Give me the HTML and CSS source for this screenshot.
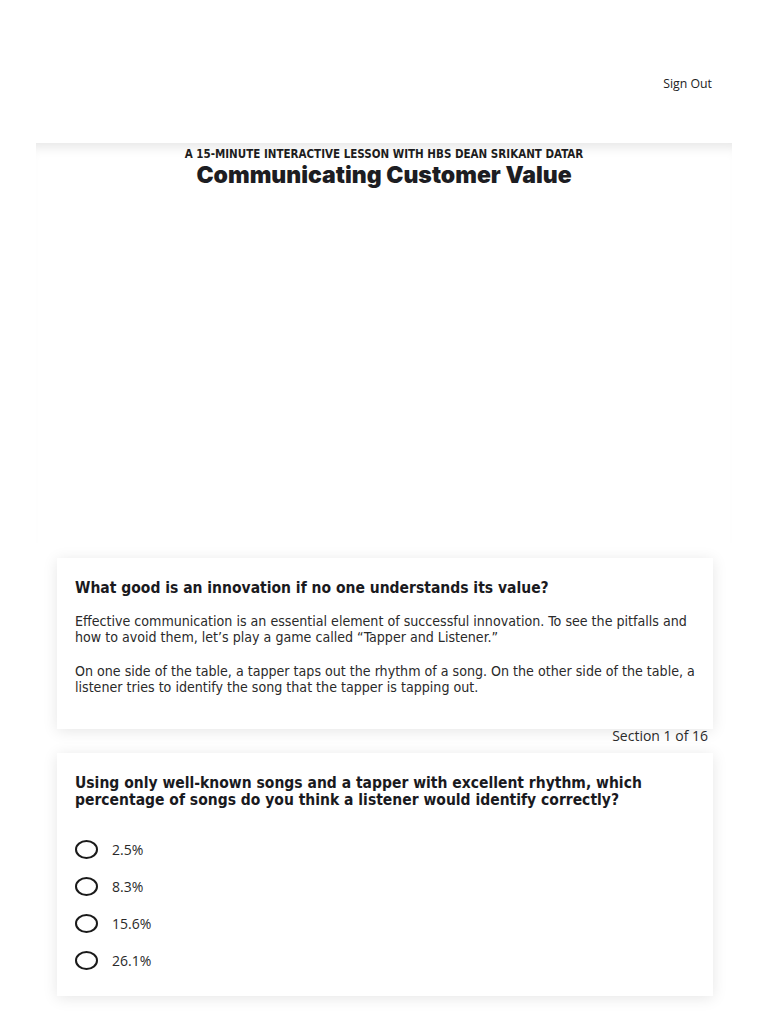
FILE: index.html
```html
<!DOCTYPE html>
<html lang="en">
<head>
<meta charset="utf-8">
<title>Communicating Customer Value</title>
<link rel="stylesheet" href="styles.css">
</head>
<body>
<div class="page">
  <header class="topbar">
    <a class="signout" href="#">Sign Out</a>
  </header>

  <section class="hero">
    <p class="kicker">A 15-MINUTE INTERACTIVE LESSON WITH HBS DEAN SRIKANT DATAR</p>
    <h1 class="title">Communicating Customer Value</h1>
  </section>

  <main class="lesson">
    <article class="card intro">
      <h2 class="card-heading">What good is an innovation if no one understands its value?</h2>
      <p class="card-text">Effective communication is an essential element of successful innovation. To see the pitfalls and how to avoid them, let’s play a game called “Tapper and Listener.”</p>
      <p class="card-text">On one side of the table, a tapper taps out the rhythm of a song. On the other side of the table, a listener tries to identify the song that the tapper is tapping out.</p>
    </article>
    <div class="progress">Section 1 of 16</div>

    <article class="card quiz">
      <h2 class="card-heading">Using only well-known songs and a tapper with excellent rhythm, which percentage of songs do you think a listener would identify correctly?</h2>
      <ul class="options">
        <li class="option"><span class="radio"></span><span class="option-label">2.5%</span></li>
        <li class="option"><span class="radio"></span><span class="option-label">8.3%</span></li>
        <li class="option"><span class="radio"></span><span class="option-label">15.6%</span></li>
        <li class="option"><span class="radio"></span><span class="option-label">26.1%</span></li>
      </ul>
    </article>
  </main>
</div>
</body>
</html>
```

FILE: styles.css
```css
* {
  box-sizing: border-box;
}

html, body {
  margin: 0;
  padding: 0;
  background: #ffffff;
}

body {
  font-family: "Liberation Sans", Arial, sans-serif;
  color: #222222;
  overflow: hidden;
}

.page {
  width: 768px;
  height: 1024px;
  overflow: hidden;
}

/* top bar */
.topbar {
  display: flex;
  justify-content: flex-end;
  padding: 76px 56px 0 0;
  height: 143px;
}

.signout {
  font-family: "Open Sans", sans-serif;
  font-size: 12.3px;
  color: #222222;
  text-decoration: none;
  line-height: 16px;
}

/* hero */
.hero {
  margin: 0 36px;
  height: 400px;
  text-align: center;
  padding-top: 4px;
  box-shadow: inset 0 12px 12px -8px rgba(0, 0, 0, 0.10);
}

.kicker {
  margin: 0;
  font-family: "DejaVu Sans Condensed", sans-serif;
  font-weight: 700;
  font-size: 11.5px;
  line-height: 14px;
  color: #1d1d20;
}

.title {
  margin: 1px 0 0;
  font-family: "Inter", sans-serif;
  font-weight: 900;
  font-size: 23px;
  line-height: 26px;
  color: #1d1d22;
}

/* lesson cards */
.lesson {
  margin: 15px 55px 0 57px;
}

.card {
  background: #ffffff;
  box-shadow: 0 2px 14px rgba(0, 0, 0, 0.10);
  padding: 22px 18px 0;
}

.intro {
  height: 171px;
}

.quiz {
  height: 243px;
  padding-top: 22px;
}

.card-heading {
  margin: 0;
  font-family: "DejaVu Sans Condensed", sans-serif;
  font-weight: 700;
  font-size: 15.5px;
  line-height: 17px;
  color: #1a1a1e;
}

.card-text {
  margin: 16px 0 0;
  font-family: "DejaVu Sans Condensed", sans-serif;
  font-size: 14.1px;
  line-height: 16px;
  color: #2a2a2a;
}

.intro .card-text + .card-text {
  margin-top: 18px;
}

.progress {
  text-align: right;
  padding-right: 5px;
  font-family: "Open Sans", sans-serif;
  font-size: 14px;
  line-height: 14px;
  height: 24px;
  color: #2a2a2a;
}

.options {
  list-style: none;
  margin: 31px 0 0;
  padding: 0;
  display: flex;
  flex-direction: column;
  gap: 18px;
}

.option {
  display: flex;
  align-items: center;
  gap: 14px;
  height: 19px;
}

.radio {
  width: 23px;
  height: 19px;
  border: 2px solid #1a1a1a;
  border-radius: 50%;
  flex: none;
}

.option-label {
  font-family: "Open Sans", sans-serif;
  font-size: 14px;
  color: #2a2a2a;
}
```
